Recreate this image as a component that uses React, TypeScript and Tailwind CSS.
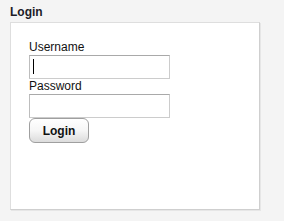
export default function App() {
  return (
    <div
      className="min-h-screen w-full bg-[#f4f4f4] pt-[5px]"
      style={{ fontFamily: '"Liberation Sans", Arial, sans-serif' }}
    >
      <h2 className="pl-[10px] text-[12px] leading-[15px] font-bold text-[#1c1c28]">Login</h2>

      {/* Login panel */}
      <div className="mt-[2px] ml-[10px] w-[250px] h-[188px] bg-white border border-[#dedede] border-r-[#cfcfcf] border-b-[#cfcfcf] shadow-[1px_1px_0_#e6e6e6] pt-[17px] pl-[18px]">
        <form className="flex flex-col items-start" onSubmit={(e) => e.preventDefault()}>
          <label className="text-[12px] leading-[15px] text-[#111]">Username</label>
          <div className="relative">
            <input
              type="text"
              className="block w-[141px] h-[24px] bg-white border border-[#cccccc] border-t-[#a9a9a9] border-l-[#bdbdbd] outline-none px-[3px] text-[12px]"
            />
            <span className="absolute left-[4px] top-[4px] w-[1px] h-[15px] bg-black" />
          </div>
          <label className="text-[12px] leading-[15px] text-[#111]">Password</label>
          <input
            type="password"
            className="block w-[141px] h-[24px] bg-white border border-[#cccccc] border-t-[#a9a9a9] border-l-[#bdbdbd] outline-none px-[3px] text-[12px]"
          />
          <button
            type="submit"
            className="w-[60px] h-[25px] rounded-[6px] border border-[#9f9f9f] bg-gradient-to-b from-white via-[#f6f6f6] to-[#dcdcdc] text-[12px] font-bold text-[#111] shadow-[inset_0_1px_0_#fff]"
          >
            Login
          </button>
        </form>
      </div>
    </div>
  );
}
